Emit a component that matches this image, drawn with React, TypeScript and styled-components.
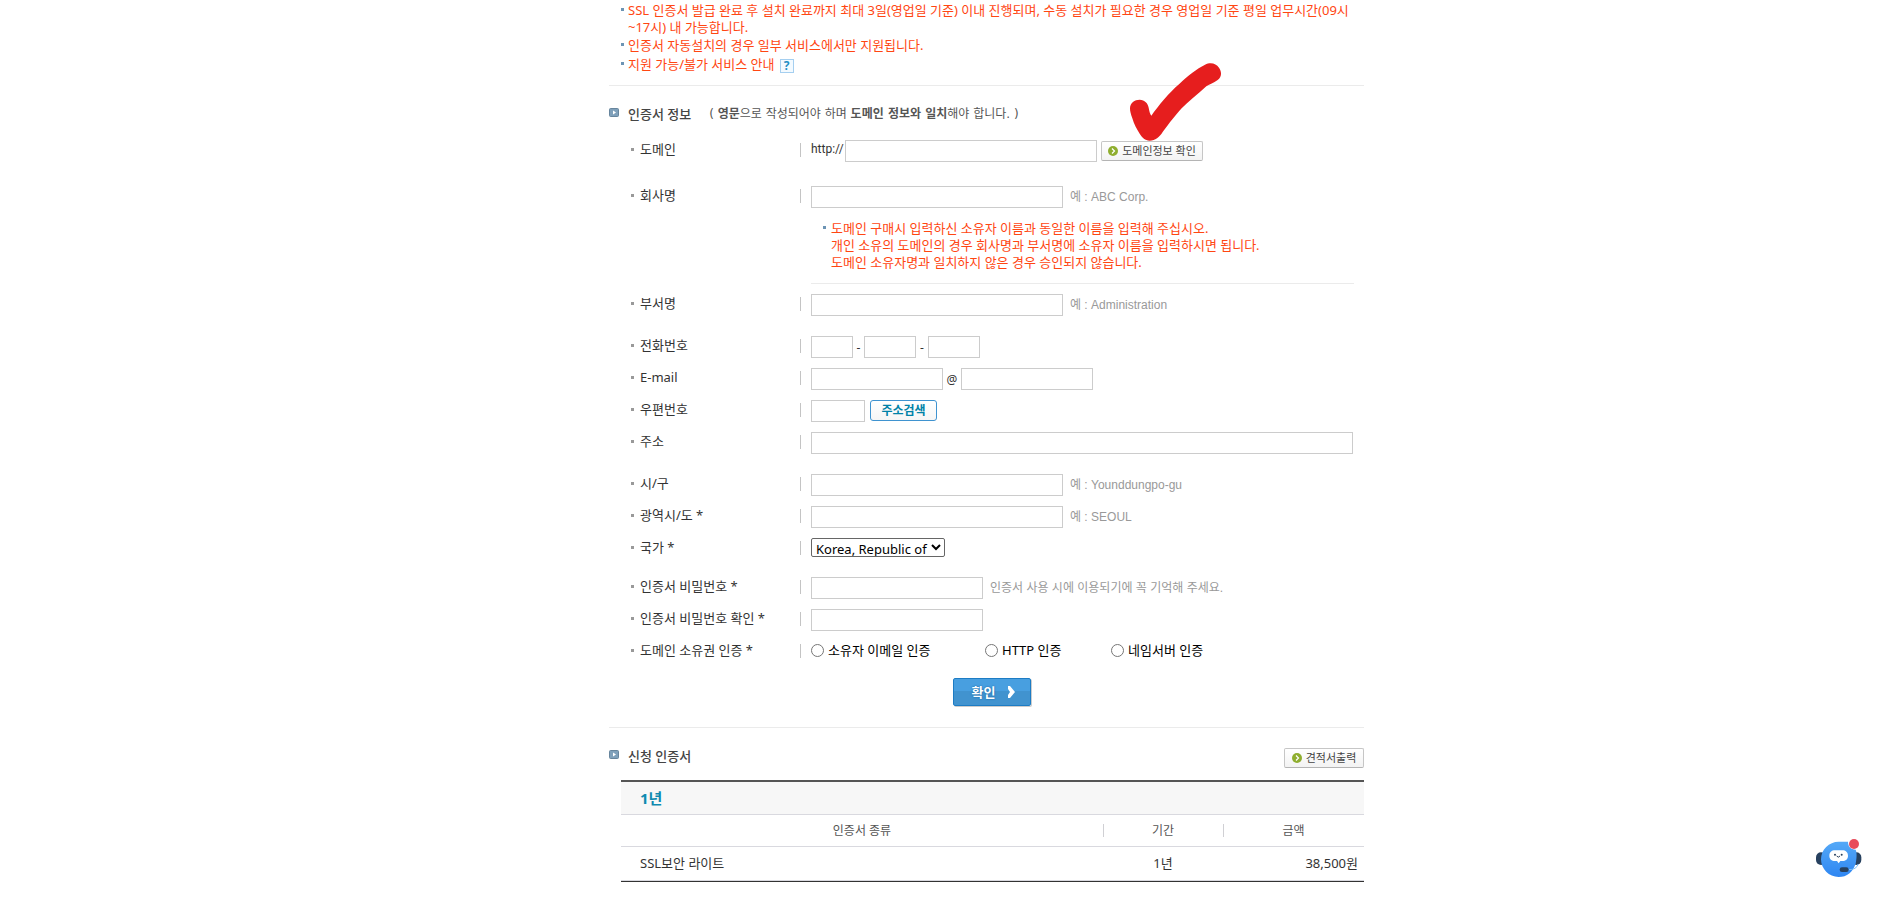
import React from 'react';
import styled, { createGlobalStyle } from 'styled-components';

const GlobalStyle = createGlobalStyle`
  *, *::before, *::after { box-sizing: border-box; }
  body {
    margin: 0;
    background: #fff;
    color: #333;
    font: 13px/17px "Noto Sans", "Noto Sans CJK KR", sans-serif;
  }
  button, input, select { font: inherit; }
`;

const Page = styled.main`
  max-width: 851px;
  margin: 0 auto;
  padding: 2px 0 8px 96px;
`;

const Notices = styled.ul`
  list-style: none;
  margin: 0;
  padding: 0 0 12px 12px;
  color: #ff4612;
`;

const Notice = styled.li<{ $gap?: number }>`
  display: flex;
  margin-top: ${(p) => p.$gap ?? 0}px;
  &::before {
    content: '';
    flex: none;
    width: 3px;
    height: 3px;
    margin: 6px 4px 0 0;
    background: #6c94b4;
  }
`;

const HelpLink = styled.a`
  display: inline-block;
  width: 14px;
  height: 14px;
  margin-left: 5px;
  border: 1px solid #a5cff0;
  background: #f3faff;
  color: #1f8fc4;
  font: bold 12px/12px "Noto Sans", sans-serif;
  text-align: center;
  text-decoration: none;
  vertical-align: middle;
`;

const Divider = styled.hr`
  height: 1px;
  margin: 0;
  border: 0;
  background: #ebebeb;
`;

const SectionHead = styled.header`
  display: flex;
  align-items: flex-start;
  height: 20px;
  margin-top: 20px;
  > svg {
    margin-top: 2px;
  }
`;

const SectionTitle = styled.h2`
  margin: 0 0 0 9px;
  color: #444;
  font-size: 13px;
  font-weight: 500;
`;

const SectionNote = styled.p`
  margin: 0 0 0 18px;
  color: #555;
  font-size: 12px;
  font-family: "DejaVu Sans", "Noto Sans CJK KR", sans-serif;
`;

const Form = styled.form`
  padding-left: 22px;
`;

const Row = styled.div<{ $gap?: number }>`
  display: grid;
  grid-template-columns: 169px 1px 1fr;
  align-items: start;
  margin-top: ${(p) => p.$gap ?? 10}px;
`;

const RowName = styled.div`
  display: flex;
  align-items: center;
  height: 18px;
  &::before {
    content: '';
    width: 3px;
    height: 3px;
    margin-right: 6px;
    background: #999;
  }
`;

const Separator = styled.span`
  height: 14px;
  margin-top: 3px;
  background: #c4c4c4;
`;

const Controls = styled.div`
  display: flex;
  align-items: center;
  height: 22px;
  padding: 0 11px 0 10px;
`;

const TextInput = styled.input<{ $w?: number }>`
  width: ${(p) => (p.$w ? `${p.$w}px` : '100%')};
  height: 22px;
  padding: 0 4px;
  border: 1px solid #ccc;
  border-radius: 0;
  background: #fff;
`;

const Joiner = styled.span<{ $w: number }>`
  width: ${(p) => p.$w}px;
  font-size: 12px;
  text-align: center;
`;

const Scheme = styled.span`
  width: 34px;
  height: 20px;
  font-size: 12px;
  font-family: Roboto, sans-serif;
`;

const Hint = styled.span`
  margin-left: 7px;
  color: #999;
  font-size: 12px;
  font-family: "Liberation Sans", "Noto Sans CJK KR", sans-serif;
  white-space: nowrap;
`;

const CheckAnchor = styled.div`
  position: relative;
  margin-left: 4px;
`;

const CheckMark = styled.svg`
  position: absolute;
  left: 29px;
  top: -78px;
  pointer-events: none;
`;

const SmallButton = styled.button<{ $w: number }>`
  display: flex;
  align-items: center;
  justify-content: center;
  gap: 4px;
  width: ${(p) => p.$w}px;
  height: 20px;
  padding: 0;
  border: 1px solid #c6c6c6;
  border-bottom-color: #b4b4b4;
  border-radius: 2px;
  background: linear-gradient(#fff, #f3f3f3);
  color: #444;
  font-size: 11px;
  line-height: 16px;
  white-space: nowrap;
`;

const SearchButton = styled.button`
  align-self: flex-start;
  width: 67px;
  height: 21px;
  margin-left: 5px;
  padding: 0;
  border: 1px solid #3f93d0;
  border-radius: 3px;
  background: linear-gradient(#fff, #f6f6f6);
  color: #0083a8;
  font-size: 12px;
  font-weight: bold;
  line-height: 17px;
`;

const Guide = styled.div`
  margin: 12px 10px 0 180px;
  padding: 0 0 12px 12px;
  border-bottom: 1px solid #ebebeb;
  color: #ff4612;
`;

const GuideText = styled.p`
  display: flex;
  margin: 0;
  &::before {
    content: '';
    flex: none;
    width: 3px;
    height: 3px;
    margin: 6px 5px 0 0;
    background: #6c94b4;
  }
`;

const CountrySelect = styled.select`
  align-self: flex-start;
  width: 134px;
  height: 19px;
  padding: 0;
  border: 1px solid #666;
  border-radius: 2px;
  background: #fff;
  color: #000;
  line-height: 15px;
`;

const Choices = styled.div`
  display: grid;
  grid-template-columns: 174px 126px auto;
  align-self: flex-start;
`;

const Choice = styled.label`
  display: flex;
  align-items: center;
  gap: 4px;
  height: 18px;
  color: #000;
  white-space: nowrap;
  input {
    width: 13px;
    height: 13px;
    margin: 0;
  }
`;

const Submit = styled.div`
  display: flex;
  justify-content: center;
  padding: 15px 0 21px 10px;
`;

const SubmitButton = styled.button`
  display: flex;
  align-items: center;
  justify-content: center;
  gap: 13px;
  width: 78px;
  height: 28px;
  padding: 0 0 0 4px;
  border: 1px solid #1d7cc4;
  border-radius: 2px;
  background: linear-gradient(#489fe0 46%, #4193cf 46%);
  box-shadow: 1px 1px 0 #ccc;
  color: #fff;
  font-weight: bold;
  text-shadow: 0 0 2px #14609c;
`;

const Estimate = styled.div`
  margin-left: auto;
`;

const PlanTable = styled.table`
  width: calc(100% - 12px);
  margin: 12px 0 0 12px;
  border-collapse: separate;
  border-spacing: 0;
  border-top: 2px solid #555;
  border-bottom: 1px solid #333;
  table-layout: fixed;
`;

const PlanCaption = styled.th`
  height: 33px;
  padding: 0 0 0 19px;
  border-bottom: 1px solid #d9d9df;
  background: #f7f7f7;
  color: #0f8ab0;
  font-size: 15px;
  font-weight: bold;
  text-align: left;
`;

const ColumnHead = styled.th<{ $line?: boolean }>`
  height: 32px;
  padding: 0;
  border-bottom: 1px solid #d9d9df;
  background: ${(p) => (p.$line ? 'linear-gradient(#d0d0d4, #d0d0d4) no-repeat 0 50% / 1px 13px' : 'none')};
  color: #555;
  font-size: 12px;
  font-weight: normal;
`;

const Cell = styled.td<{ $align?: string }>`
  height: 34px;
  padding: 0 6px 0 ${(p) => (p.$align === 'center' ? 6 : 19)}px;
  border-bottom: 1px solid #d9d9df;
  text-align: ${(p) => p.$align ?? 'left'};
`;

const ChatButton = styled.button`
  position: fixed;
  right: 15px;
  bottom: 20px;
  width: 47px;
  height: 40px;
  padding: 0;
  border: 0;
  background: none;
`;

const SectionIcon = () => (
  <svg width="10" height="9" viewBox="0 0 10 9" aria-hidden="true">
    <rect x="0.5" y="0.5" width="9" height="8" rx="1" fill="#7fa0ba" stroke="#67859d" />
    <path d="M4 2.5 7 4.5 4 6.5z" fill="#fff" />
  </svg>
);

const GreenArrow = () => (
  <svg width="10" height="10" viewBox="0 0 10 10" aria-hidden="true">
    <circle cx="5" cy="5" r="5" fill="#8fae2f" />
    <path d="M4 2.5 6.5 5 4 7.5" fill="none" stroke="#fff" strokeWidth="1.2" />
  </svg>
);

type FieldProps = { label: string; id: string; gap?: number; children: React.ReactNode };

const Field = ({ label, id, gap, children }: FieldProps) => (
  <Row $gap={gap}>
    <RowName>
      <label htmlFor={id}>{label}</label>
    </RowName>
    <Separator />
    <Controls>{children}</Controls>
  </Row>
);

const methods = ['소유자 이메일 인증', 'HTTP 인증', '네임서버 인증'];

export default function App() {
  return (
    <>
      <GlobalStyle />
      <Page>
        <Notices>
          <Notice>
            <span>
              SSL 인증서 발급 완료 후 설치 완료까지 최대 3일(영업일 기준) 이내 진행되며, 수동 설치가 필요한 경우 영업일 기준 평일 업무시간(09시
              <br />
              ~17시) 내 가능합니다.
            </span>
          </Notice>
          <Notice $gap={1}>
            <span>인증서 자동설치의 경우 일부 서비스에서만 지원됩니다.</span>
          </Notice>
          <Notice $gap={2}>
            <span>
              지원 가능/불가 서비스 안내
              <HelpLink href="#services" aria-label="지원 서비스 안내">?</HelpLink>
            </span>
          </Notice>
        </Notices>
        <Divider />

        <SectionHead>
          <SectionIcon />
          <SectionTitle>인증서 정보</SectionTitle>
          <SectionNote>
            ( <b>영문</b>으로 작성되어야 하며 <b>도메인 정보와 일치</b>해야 합니다. )
          </SectionNote>
        </SectionHead>

        <Form onSubmit={(e) => e.preventDefault()}>
          <Field label="도메인" id="domain" gap={14}>
            <Scheme>http://</Scheme>
            <TextInput id="domain" $w={252} />
            <CheckAnchor>
              <SmallButton type="button" $w={102}>
                <GreenArrow />
                도메인정보 확인
              </SmallButton>
              <CheckMark width="92" height="78" viewBox="450 189 276 234" aria-hidden="true">
                <path
                  fill="#e61e1e"
                  d="M450 325C450 308 464 299 479 299C494 299 504 310 506 323C508 334 510 341 514 347C535 318 570 275 597 253C625 225 650 207 675 194C692 185 708 190 717 203C727 218 724 232 713 240C700 250 690 252 679 259C650 285 625 305 605 325C585 347 570 367 548 396C538 412 526 422 509 422C495 422 487 414 480 403C470 387 462 372 457 355C452 341 450 334 450 325Z"
                />
              </CheckMark>
            </CheckAnchor>
          </Field>
          <Field label="회사명" id="company" gap={24}>
            <TextInput id="company" $w={252} />
            <Hint>예 : ABC Corp.</Hint>
          </Field>
          <Guide>
            <GuideText>
              <span>
                도메인 구매시 입력하신 소유자 이름과 동일한 이름을 입력해 주십시오.
                <br />
                개인 소유의 도메인의 경우 회사명과 부서명에 소유자 이름을 입력하시면 됩니다.
                <br />
                도메인 소유자명과 일치하지 않은 경우 승인되지 않습니다.
              </span>
            </GuideText>
          </Guide>
          <Field label="부서명" id="department">
            <TextInput id="department" $w={252} />
            <Hint>예 : Administration</Hint>
          </Field>
          <Field label="전화번호" id="phone" gap={20}>
            <TextInput id="phone" $w={42} />
            <Joiner $w={11}>-</Joiner>
            <TextInput aria-label="전화번호 가운데 자리" $w={52} />
            <Joiner $w={12}>-</Joiner>
            <TextInput aria-label="전화번호 끝자리" $w={52} />
          </Field>
          <Field label="E-mail" id="email">
            <TextInput id="email" $w={132} />
            <Joiner $w={18}>@</Joiner>
            <TextInput aria-label="E-mail 도메인" $w={132} />
          </Field>
          <Field label="우편번호" id="zip">
            <TextInput id="zip" $w={54} />
            <SearchButton type="button">주소검색</SearchButton>
          </Field>
          <Field label="주소" id="address">
            <TextInput id="address" />
          </Field>
          <Field label="시/구" id="city" gap={20}>
            <TextInput id="city" $w={252} />
            <Hint>예 : Younddungpo-gu</Hint>
          </Field>
          <Field label="광역시/도 *" id="province">
            <TextInput id="province" $w={252} />
            <Hint>예 : SEOUL</Hint>
          </Field>
          <Field label="국가 *" id="country">
            <CountrySelect id="country">
              <option>Korea, Republic of</option>
            </CountrySelect>
          </Field>
          <Field label="인증서 비밀번호 *" id="password" gap={17}>
            <TextInput id="password" type="password" $w={172} />
            <Hint>인증서 사용 시에 이용되기에 꼭 기억해 주세요.</Hint>
          </Field>
          <Field label="인증서 비밀번호 확인 *" id="password-check">
            <TextInput id="password-check" type="password" $w={172} />
          </Field>
          <Field label="도메인 소유권 인증 *" id="method-0">
            <Choices>
              {methods.map((m, i) => (
                <Choice key={m}>
                  <input type="radio" name="method" id={`method-${i}`} />
                  {m}
                </Choice>
              ))}
            </Choices>
          </Field>
        </Form>
        <Submit>
          <SubmitButton type="button">
            확인
            <svg width="7" height="12" viewBox="0 0 7 12" aria-hidden="true">
              <path d="M0 0 2 0 7 6 2 12 0 12 0 9 2 6 0 3z" fill="#fff" />
            </svg>
          </SubmitButton>
        </Submit>
        <Divider />

        <SectionHead>
          <SectionIcon />
          <SectionTitle>신청 인증서</SectionTitle>
          <Estimate>
            <SmallButton type="button" $w={80}>
              <GreenArrow />
              견적서출력
            </SmallButton>
          </Estimate>
        </SectionHead>
        <PlanTable>
          <colgroup>
            <col />
            <col width="120" />
            <col width="141" />
          </colgroup>
          <thead>
            <tr>
              <PlanCaption colSpan={3}>1년</PlanCaption>
            </tr>
            <tr>
              <ColumnHead>인증서 종류</ColumnHead>
              <ColumnHead $line>기간</ColumnHead>
              <ColumnHead $line>금액</ColumnHead>
            </tr>
          </thead>
          <tbody>
            <tr>
              <Cell>SSL보안 라이트</Cell>
              <Cell $align="center">1년</Cell>
              <Cell $align="right">38,500원</Cell>
            </tr>
          </tbody>
        </PlanTable>
      </Page>

      <ChatButton type="button" aria-label="채팅 상담">
        <svg width="47" height="40" viewBox="54 54 141 120" aria-hidden="true">
          <defs>
            <linearGradient id="bot" x1="0" y1="0" x2="0" y2="1">
              <stop offset="0" stopColor="#55a9f7" />
              <stop offset="1" stopColor="#2e86f2" />
            </linearGradient>
          </defs>
          <rect x="57" y="97" width="30" height="38" rx="15" fill="#27415f" />
          <rect x="163" y="97" width="30" height="38" rx="15" fill="#27415f" />
          <path d="M125 65H153C153 80 162 88 176 89C181 100 178 122 176 131C168 155 150 171 125 171C96 171 72 147 72 118S96 65 125 65Z" fill="url(#bot)" />
          <path d="M114 91H136C146 91 153 97 153 107S146 123 136 123H130L125 130 120 123H114C104 123 97 117 97 107S104 91 114 91Z" fill="#fff" />
          <circle cx="114" cy="104" r="3" fill="#27415f" />
          <circle cx="134" cy="104" r="3" fill="#27415f" />
          <path d="M119 108Q124 115 129 108" fill="none" stroke="#27415f" strokeWidth="3" />
          <path d="M184 132Q178 149 156 149" fill="none" stroke="#7dc0fb" strokeWidth="3" />
          <rect x="128" y="142" width="27" height="14" rx="7" fill="#27415f" />
          <circle cx="171" cy="72" r="15" fill="#e84c5b" />
        </svg>
      </ChatButton>
    </>
  );
}
